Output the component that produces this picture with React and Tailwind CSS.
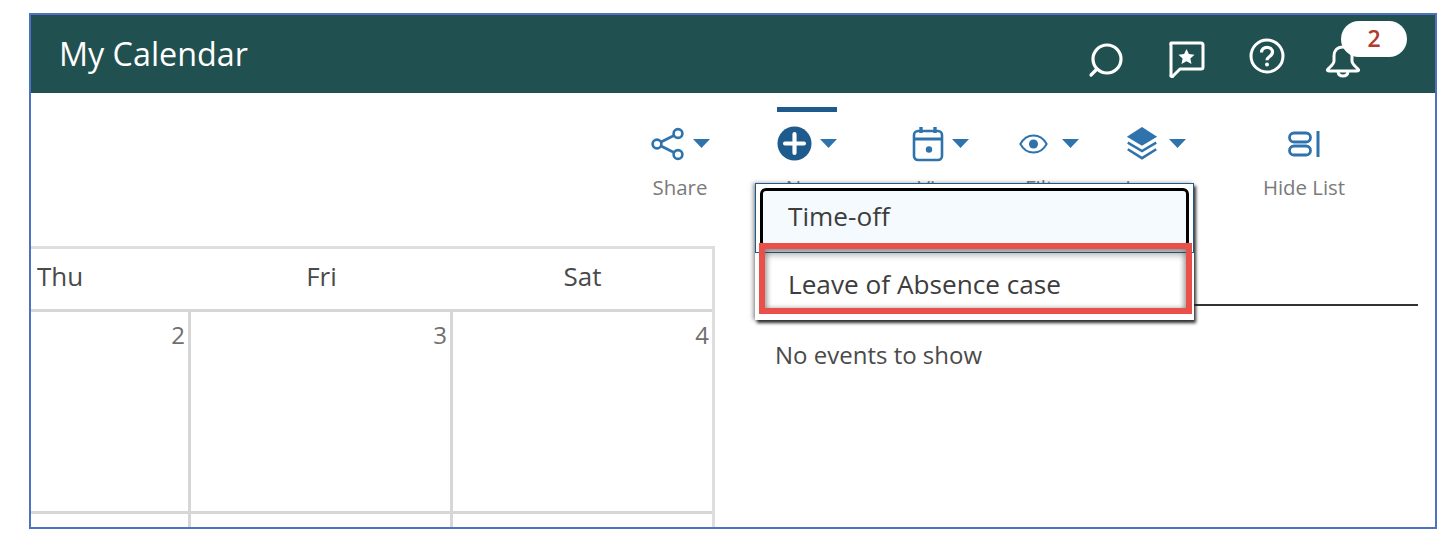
function Caret() {
  return (
    <svg width="17" height="9" viewBox="0 0 17 9" className="shrink-0">
      <path d="M0 0H17L8.5 9Z" fill="#2f73ad" />
    </svg>
  );
}

function ShareIcon() {
  return (
    <svg width="34" height="34" viewBox="0 0 34 34" fill="none" stroke="#2f73ad" strokeWidth="2.6">
      <circle cx="6" cy="17" r="4.4" />
      <circle cx="27" cy="6.5" r="4.4" />
      <circle cx="27" cy="27.5" r="4.4" />
      <path d="M10 15 23 8.5M10 19l13 6.5" />
    </svg>
  );
}

function NewIcon() {
  return (
    <svg width="37" height="37" viewBox="0 0 37 37">
      <circle cx="18.5" cy="18.5" r="18" fill="#1f5a8c" />
      <path d="M18.5 8.5v20M8.5 18.5h20" stroke="#fff" strokeWidth="4.4" strokeLinecap="round" />
    </svg>
  );
}

function CalendarIcon() {
  return (
    <svg width="32" height="36" viewBox="0 0 32 36" fill="none" stroke="#2f73ad" strokeWidth="2.6">
      <rect x="2" y="5" width="28" height="29" rx="4" />
      <path d="M2 13h28" strokeWidth="3" />
      <path d="M9 1v6M23 1v6" strokeWidth="3.4" />
      <circle cx="17" cy="23.5" r="3.2" fill="#2f73ad" stroke="none" />
    </svg>
  );
}

function EyeIcon() {
  return (
    <svg width="32" height="22" viewBox="0 0 32 22" fill="none">
      <path d="M1.5 11C5 4.5 10 1.5 16 1.5S27 4.5 30.5 11C27 17.5 22 20.5 16 20.5S5 17.5 1.5 11Z" stroke="#2f73ad" strokeWidth="2.2" />
      <circle cx="16" cy="11" r="5" fill="#2f73ad" />
    </svg>
  );
}

function LayersIcon() {
  return (
    <svg width="36" height="37" viewBox="0 0 36 37" fill="none">
      <path d="M18 0 35 11 18 21 1 11Z" fill="#2f73ad" />
      <path d="M2 17.5 18 27 34 17.5M2 25 18 35 34 25" stroke="#2f73ad" strokeWidth="2.8" />
    </svg>
  );
}

function HideListIcon() {
  return (
    <svg width="32" height="28" viewBox="0 0 32 28" fill="none" stroke="#2f73ad" strokeWidth="2.8">
      <rect x="1.5" y="3" width="21" height="9" rx="4.5" />
      <rect x="1.5" y="16" width="21" height="9" rx="4.5" />
      <path d="M30 1v26" strokeWidth="3" />
    </svg>
  );
}

function ToolItem({ className, gap = "gap-[8px]", label, active, children }) {
  return (
    <div className={`flex w-[60px] flex-col items-center ${className}`}>
      <div className={`h-[5px] w-[60px] ${active ? "bg-[#1f5a8c]" : ""}`} />
      <div className={`mt-[13px] flex h-[37px] w-[60px] items-center justify-center whitespace-nowrap ${gap}`}>
        {children}
      </div>
      <div className="mt-[11px] whitespace-nowrap text-[20.4px] leading-[28px] text-[#7a7a7a]">{label}</div>
    </div>
  );
}

function HeaderIcons() {
  return (
    <div className="mr-[72px] mt-[23px] flex self-start">
      <svg width="40" height="40" viewBox="0 0 40 40" fill="none" stroke="#fff" strokeWidth="3.2" strokeLinecap="round">
        <circle cx="21" cy="21" r="14" />
        <path d="M11 31 5 37" />
      </svg>
      <svg className="ml-[40px]" width="40" height="40" viewBox="0 0 40 40" fill="none">
        <path d="M5 5h30a2 2 0 0 1 2 2v22a2 2 0 0 1-2 2H14l-7 7a1 1 0 0 1-2-1V7a2 2 0 0 1 0-2Z" stroke="#fff" strokeWidth="3" strokeLinejoin="round" />
        <path d="M20.5 11l2.4 5 5.6.7-4.1 3.8 1.1 5.5-5-2.8-5 2.8 1.1-5.5-4.1-3.8 5.6-.7Z" fill="#fff" />
      </svg>
      <svg className="ml-[41px]" width="40" height="40" viewBox="0 0 40 40" fill="none" stroke="#fff" strokeWidth="3">
        <circle cx="20" cy="18" r="16" />
        <path d="M14.5 14.5c0-3.2 2.4-5.2 5.5-5.2s5.5 2 5.5 4.800c0 4.500-5.500 4.300-5.500 8.200" strokeWidth="3.200" />
        <circle cx="20" cy="26.500" r="2" fill="#fff" stroke="none" />
      </svg>
      <div className="relative ml-[36px] h-[40px] w-[40px]">
        <svg width="40" height="40" viewBox="0 0 40 40" fill="none" stroke="#fff" strokeWidth="3" strokeLinejoin="round">
          <path d="M20 9c-6 0-9 4-9 9v5c0 3-3 5-6 8-1 1-1 2 1 2h28c2 0 2-1 1-2-3-3-6-5-6-8v-5c0-5-3-9-9-9Z" />
          <path d="M15 34c.5 3 2.500 4 5 4s4.500-1 5-4" />
        </svg>
        <div className="absolute left-[18px] top-[-17px] flex h-[36px] w-[66px] items-center justify-center rounded-full bg-white pb-[2px] text-[23px] font-semibold leading-none text-[#b23a2a]">
          2
        </div>
      </div>
    </div>
  );
}

function Calendar() {
  return (
    <div className="h-full w-[684px] shrink-0 border-r-[3px] border-t-[3px] border-[#dedede]">
      <div className="grid h-[60px] grid-cols-[160px_262px_259px] items-center pb-[6px] text-[26px] leading-none text-[#4a4a4a]">
        <div className="pl-[6px] text-left">Thu</div>
        <div className="pr-[1px] text-center">Fri</div>
        <div className="text-center">Sat</div>
      </div>
      <div className="grid h-[205px] grid-cols-[160px_262px_259px] border-y-[3px] border-[#d6d6d6] text-right text-[24px] leading-none text-[#6f6f6f]">
        <div className="border-r-[3px] border-[#d6d6d6] pr-[3px] pt-[11px]">2</div>
        <div className="border-r-[3px] border-[#d6d6d6] pr-[3px] pt-[11px]">3</div>
        <div className="pr-[3px] pt-[11px]">4</div>
      </div>
      <div className="grid h-[20px] grid-cols-[160px_262px_259px]">
        <div className="border-r-[3px] border-[#d6d6d6]" />
        <div className="border-r-[3px] border-[#d6d6d6]" />
        <div />
      </div>
    </div>
  );
}

export default function App() {
  return (
    <div className="h-[556px] w-[1450px] overflow-hidden bg-white pl-[29px] pt-[13px] font-['Open_Sans','Noto_Sans',sans-serif]">
      <div className="relative h-[516px] w-[1408px] overflow-hidden border-2 border-[#4d72c4]">
        <header className="flex h-[78px] items-center justify-between bg-[#215050] pl-[28px]">
          <h1 className="mb-[2px] text-[32.3px] font-medium leading-none text-white">My Calendar</h1>
          <HeaderIcons />
        </header>

        <div className="flex h-[153px] items-start pt-[14px]">
          <ToolItem className="ml-[619px]" label="Share">
            <ShareIcon />
            <Caret />
          </ToolItem>
          <ToolItem className="ml-[67px]" label="New" active>
            <NewIcon />
            <Caret />
          </ToolItem>
          <ToolItem className="ml-[73px]" label="View">
            <CalendarIcon />
            <Caret />
          </ToolItem>
          <ToolItem className="ml-[49px]" gap="gap-[14px]" label="Filter">
            <EyeIcon />
            <Caret />
          </ToolItem>
          <ToolItem className="ml-[47px]" gap="gap-[11px]" label="Layers">
            <LayersIcon />
            <Caret />
          </ToolItem>
          <ToolItem className="ml-[88px]" label="Hide List">
            <HideListIcon />
          </ToolItem>
        </div>

        <div className="flex h-[283px]">
          <Calendar />
          <aside className="ml-[60px] w-[643px]">
            <div className="h-[60px] border-b-2 border-[#333]" />
            <p className="mt-[37px] text-[24px] leading-none text-[#4a4a4a]">No events to show</p>
          </aside>
        </div>

        <div className="absolute left-[724px] top-[168px] h-[137px] w-[439px] bg-white shadow-[2px_3px_3px_rgba(30,30,30,0.9),-2px_0_4px_rgba(60,60,60,0.5)]">
          <div className="h-[70px] border border-[#1f5a8c] bg-white p-[4px]">
            <div className="flex h-[60px] items-center rounded-[6px] border-[3px] border-black bg-[#f5faff] pb-[4px] pl-[25px] text-[26.2px] leading-none text-[#3d3d3d]">
              Time-off
            </div>
          </div>
          <div className="flex h-[62px] items-center pl-[33px] text-[26.2px] leading-none text-[#3d3d3d]">
            Leave of Absence case
          </div>
          <div className="absolute left-[4px] top-[60px] h-[71px] w-[433px] border-[6px] border-[#e9504a] shadow-[inset_0_6px_6px_rgba(60,60,60,0.4),inset_3px_0_4px_rgba(60,60,60,0.25),inset_-3px_0_4px_rgba(60,60,60,0.25)]" />
        </div>
      </div>
    </div>
  );
}
